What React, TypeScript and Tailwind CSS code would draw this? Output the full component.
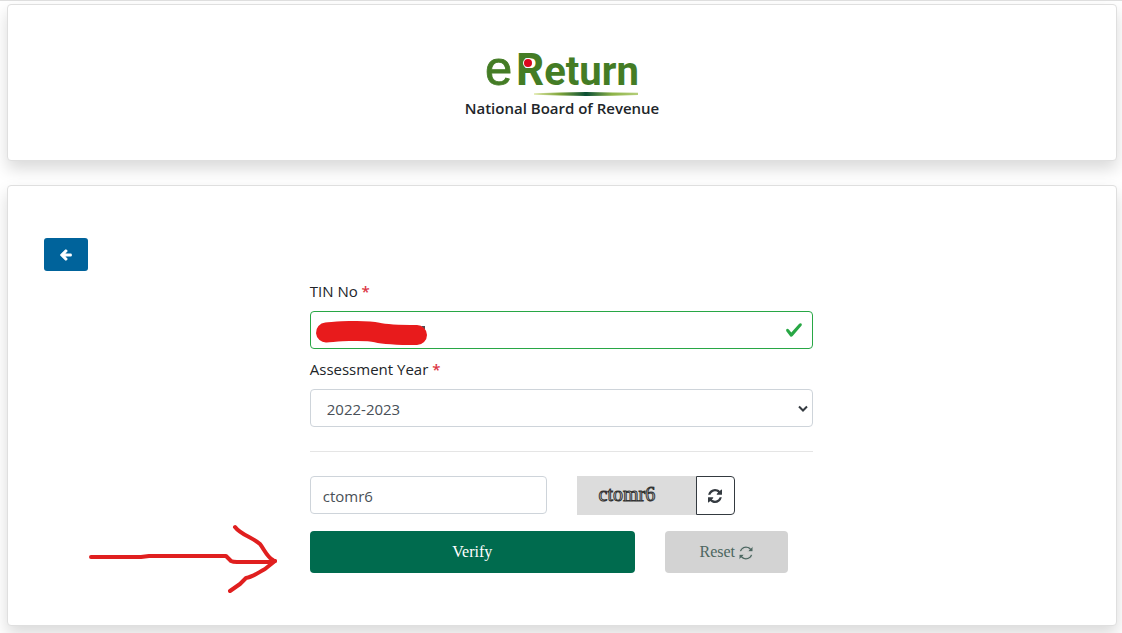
import { useState } from "react";
import { FaArrowLeft } from "react-icons/fa";

function RefreshIcon({ className }: { className?: string }) {
  return (
    <svg viewBox="0 0 1536 1536" className={className} fill="currentColor" aria-hidden="true">
      <path d="M1511 928q0 5-1 7-64 268-268 434.5T764 1536q-146 0-282.5-55T238 1324l-129 129q-19 19-45 19t-45-19-19-45V960q0-26 19-45t45-19h448q26 0 45 19t19 45-19 45l-137 137q71 66 161 102t187 36q134 0 250-65t186-179q11-17 53-117 8-23 30-23h192q13 0 22.5 9.5t9.5 22.5zm25-800v448q0 26-19 45t-45 19h-448q-26 0-45-19t-19-45 19-45l138-138Q969 256 768 256q-134 0-250 65T332 500q-11 17-53 117-8 23-30 23H50q-13 0-22.5-9.5T18 608v-7q65-268 270-434.5T768 0q146 0 284 55.5T1297 212l130-129q19-19 45-19t45 19 19 45z" />
    </svg>
  );
}

function Logo() {
  return (
    <svg viewBox="0 0 156 60" className="h-[60px] w-[156px]" role="img" aria-label="eReturn">
      <defs>
        <linearGradient id="swoosh" x1="0" x2="1" y1="0" y2="0">
          <stop offset="0" stopColor="#dfe8a8" />
          <stop offset="0.25" stopColor="#7fa53a" />
          <stop offset="0.5" stopColor="#0b4f35" />
          <stop offset="0.75" stopColor="#8db347" />
          <stop offset="1" stopColor="#b5cf7a" />
        </linearGradient>
      </defs>
      <text x="1" y="48" fontFamily="Liberation Sans, sans-serif" fontSize="49" fill="#447c25" stroke="#447c25" strokeWidth="0.8">
        e
      </text>
      <text x="32" y="48" fontFamily="Roboto, sans-serif" fontWeight="700" fill="#447c25">
        <tspan fontSize="44">R</tspan>
        <tspan fontSize="40">eturn</tspan>
      </text>
      <circle cx="44" cy="26" r="5" fill="#fff" />
      <circle cx="44" cy="26" r="4" fill="#d9081d" />
      <path d="M50 56.2 Q77 55.4 102 55 Q130 55.4 154 55.8 V58 Q128 58.8 102 59 Q77 58.6 50 57.8Z" fill="url(#swoosh)" />
    </svg>
  );
}

const card = "rounded border border-[#dfdfdf] bg-white shadow-[0_8px_16px_rgba(0,0,0,0.15)]";
const field = "h-[38px] w-full rounded border bg-white pt-[2px] text-[15px] text-[#495057]";

export default function App() {
  const [tin, setTin] = useState("");
  const [year, setYear] = useState("2022-2023");
  const [captcha, setCaptcha] = useState("ctomr6");

  return (
    <div className="relative min-h-screen overflow-hidden border-t border-[#dedede] bg-white pt-[3px] pr-[5px] pb-[7px] pl-[7px] font-['Open_Sans','Noto_Sans',sans-serif] text-[#212529]">
      <header className={`${card} flex h-[157px] flex-col items-center pt-8`}>
        <Logo />
        <p className="text-[15px] leading-[22px] font-semibold">National Board of Revenue</p>
      </header>

      <main className={`${card} mt-6 px-9 py-[52px]`}>
        <button type="button" aria-label="Back" className="flex h-[33px] w-11 items-center justify-center rounded-[3px] bg-[#00639b] text-white">
          <FaArrowLeft className="size-3 overflow-visible" stroke="currentColor" strokeWidth="50" />
        </button>

        <form className="-mr-[15px] -ml-4 flex justify-center" onSubmit={(e) => e.preventDefault()}>
          <div className="w-1/2 px-[15px] pt-[8px] text-[15px] leading-6">
            <label htmlFor="tin" className="mb-2 block">
              TIN No <span className="font-semibold text-[#dc3545]">*</span>
            </label>
            <div className="relative">
              <input id="tin" value={tin} onChange={(e) => setTin(e.target.value)} className={`${field} border-[#28a745] px-3`} />
              <svg viewBox="0 0 8 8" className="absolute top-[10px] right-[10px] size-[18px]" fill="#28a745" aria-hidden="true">
                <path d="M2.3 6.73L.6 4.53c-.4-1.04.46-1.4 1.1-.8l1.1 1.4 3.4-3.8c.6-.63 1.6-.27 1.2.7l-4 4.6c-.43.5-.8.4-1.1.1z" />
              </svg>
              <svg viewBox="0 0 114 28" className="pointer-events-none absolute top-2 left-[5px] h-7 w-[114px]" aria-hidden="true">
                <path d="M106 7 L110 7 L110 11Z" fill="#495057" />
                <path d="M11 13.5 C18 13 26 12 34 12 C46 12 54 11.5 62 13.5 C72 16 84 16 102 16" fill="none" stroke="#e81b1c" strokeWidth="20" strokeLinecap="round" strokeLinejoin="round" />
              </svg>
            </div>

            <label htmlFor="year" className="mt-2 mb-2 block">
              Assessment Year <span className="font-semibold text-[#dc3545]">*</span>
            </label>
            <div className="relative">
              <select id="year" value={year} onChange={(e) => setYear(e.target.value)} className={`${field} appearance-none border-[#ced4da] px-4`}>
                <option>2022-2023</option>
              </select>
              <svg viewBox="0 0 10 8" className="pointer-events-none absolute top-4 right-[5px] h-2 w-[10px]" fill="none" stroke="#343a40" strokeWidth="2" aria-hidden="true">
                <path d="M1 1.5 L5 5.5 L9 1.5" />
              </svg>
            </div>

            <hr className="my-6 border-[#e5e5e5]" />

            <div className="grid grid-cols-2 gap-[30px]">
              <input aria-label="Captcha" value={captcha} onChange={(e) => setCaptcha(e.target.value)} className={`${field} border-[#ced4da] px-3`} />
              <div className="flex h-[39px]">
                <div className="w-[119px] bg-[#dcdcdc] pt-[6px] pl-[22px] font-['Liberation_Serif',serif] text-xl leading-6 text-[#dcdcdc] [-webkit-text-stroke:1px_#333]">
                  ctomr6
                </div>
                <button type="button" aria-label="Refresh captcha" className="flex w-[39px] items-center justify-center rounded-r border border-[#343a40] bg-white text-[#343a40]">
                  <RefreshIcon className="size-[14px]" />
                </button>
              </div>
            </div>

            <div className="mt-4 flex gap-[30px] font-['Liberation_Serif',serif] text-base">
              <button type="submit" className="h-[42px] w-[325px] rounded bg-[#006b4e] text-white">
                Verify
              </button>
              <button type="reset" className="flex h-[42px] w-[123px] items-center justify-center gap-1 rounded bg-[#d3d3d3] text-[#4c6660]">
                Reset
                <RefreshIcon className="mt-px size-[14px] stroke-[#d3d3d3] stroke-[110]" />
              </button>
            </div>
          </div>
        </form>
      </main>

      <svg viewBox="0 0 192 72" className="pointer-events-none absolute top-[521px] left-[87px] h-[72px] w-48" fill="none" stroke="#e01f1f" strokeWidth="4" strokeLinecap="round" strokeLinejoin="round" aria-hidden="true">
        <path d="M4 35 H54 L62 34 H139 L144 39 Q146 40 150 40 H181 L188 39" />
        <path d="M148 5 C154 13 165 15 173 22 C177 27 180 35 186 38" />
        <path d="M143 69 L153 62 L159 56 C166 55 172 50 178 47 L188 39" />
      </svg>
    </div>
  );
}
